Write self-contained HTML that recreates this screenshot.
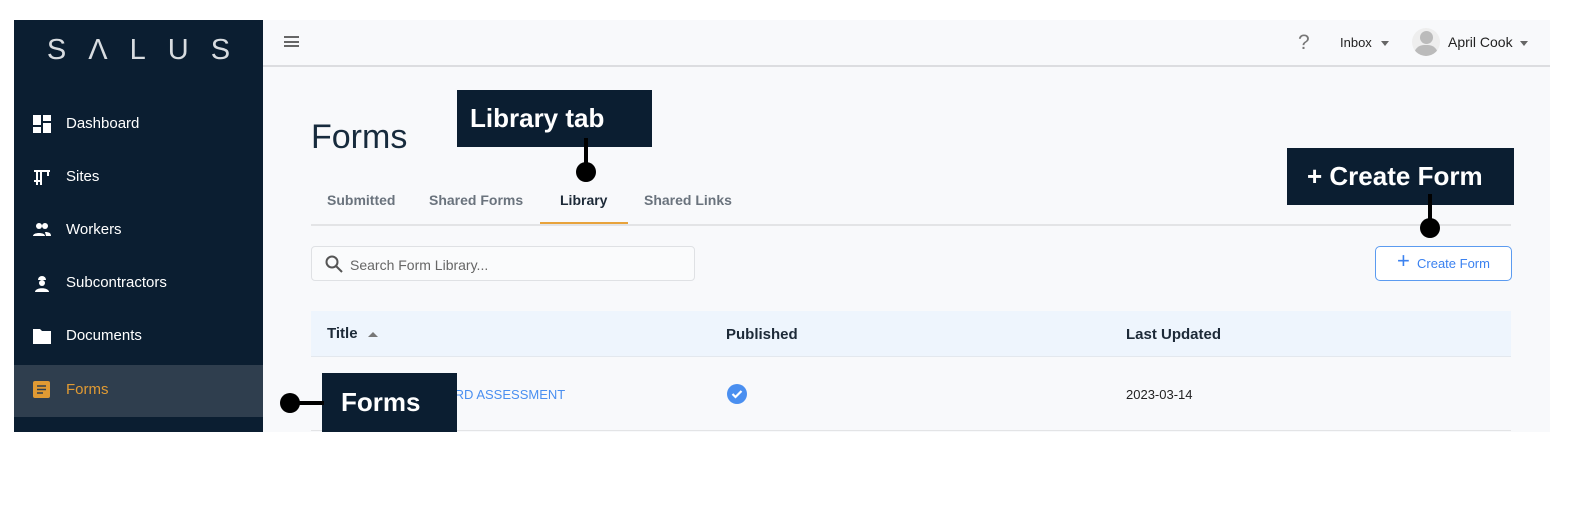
<!DOCTYPE html>
<html><head><style>
*{margin:0;padding:0;box-sizing:border-box}
body{width:1592px;height:524px;background:#fff;font-family:"Liberation Sans",sans-serif;position:relative;overflow:hidden}
.a{position:absolute}
.side{left:14px;top:20px;width:249px;height:412px;background:#0b1e31}
.logo{left:14px;top:34px;width:249px;text-align:center;color:#d8dce0;font-size:29px;letter-spacing:22px;padding-left:22px}
.nav{left:14px;width:249px;height:46px;color:#fff;font-size:15px}
.nav span{position:absolute;left:52px;top:14px}
.nav svg{position:absolute;left:19px;top:14px}
.main{left:263px;top:20px;width:1287px;height:412px;background:#f8f9fb}
.top{left:263px;top:20px;width:1287px;height:47px;background:#f8f9fb;border-bottom:2px solid #dcdde0}
.tab{top:192px;font-size:14px;color:#6a737d;font-weight:bold}
.call{background:#0b1e31;color:#fff;font-weight:bold;font-size:26px;}
.dot{width:20px;height:20px;border-radius:50%;background:#000}
</style></head><body>
<div class="a side"></div>
<div class="a logo">SΛLUS</div>
<div class="a nav" style="top:101px"><svg width="18" height="18" viewBox="0 0 18 18" fill="#fff"><rect x="0" y="0" width="8" height="10"/><rect x="10" y="0" width="8" height="6"/><rect x="0" y="12" width="8" height="6"/><rect x="10" y="8" width="8" height="10"/></svg><span>Dashboard</span></div>
<div class="a nav" style="top:154px"><svg width="18" height="18" viewBox="0 0 18 18" fill="none" stroke="#fff" stroke-width="2"><path d="M1 3h16M4 3v14M8 3v14M15 3v5M1 13h8"/></svg><span>Sites</span></div>
<div class="a nav" style="top:207px"><svg width="18" height="18" viewBox="0 0 18 18" fill="#fff"><circle cx="6" cy="5" r="3"/><circle cx="12" cy="5" r="3"/><path d="M0 15c0-4 12-4 12 0zM12 11c4 0 6 1 6 4h-5z"/></svg><span>Workers</span></div>
<div class="a nav" style="top:260px"><svg width="18" height="18" viewBox="0 0 18 18" fill="#fff"><path d="M5 6a4 4 0 0 1 8 0z"/><circle cx="9" cy="9" r="3"/><path d="M2 18c0-5 14-5 14 0z"/></svg><span>Subcontractors</span></div>
<div class="a nav" style="top:313px"><svg width="18" height="18" viewBox="0 0 18 18" fill="#fff"><path d="M0 2h7l2 2h9v13H0z"/></svg><span>Documents</span></div>
<div class="a" style="left:14px;top:365px;width:249px;height:52px;background:#2f3e4e"></div>
<div class="a nav" style="top:367px;color:#e09a33"><svg width="18" height="18" viewBox="0 0 18 18"><rect width="17" height="17" rx="2" fill="#e09a33"/><path d="M4 5h9M4 8.5h9M4 12h6" stroke="#2f3e4e" stroke-width="1.6"/></svg><span>Forms</span></div>

<div class="a main"></div>
<div class="a top"></div>
<div class="a" style="left:284px;top:36px;width:15px;height:11px;border-top:2px solid #666;border-bottom:2px solid #666"><div style="margin-top:2.5px;height:2px;background:#666"></div></div>
<div class="a" style="left:1298px;top:31px;font-size:21px;color:#777">?</div>
<div class="a" style="left:1340px;top:35px;font-size:13px;color:#222">Inbox</div>
<div class="a" style="left:1381px;top:41px;border:4px solid transparent;border-top:5px solid #666"></div>
<div class="a" style="left:1412px;top:28px;width:28px;height:28px;border-radius:50%;background:#eee;overflow:hidden"><div style="position:absolute;left:8px;top:3px;width:13px;height:13px;border-radius:50%;background:#bbb"></div><div style="position:absolute;left:2px;top:17px;width:24px;height:16px;border-radius:10px 10px 0 0;background:#bbb"></div></div>
<div class="a" style="left:1448px;top:34px;font-size:14px;color:#222">April Cook</div>
<div class="a" style="left:1520px;top:41px;border:4px solid transparent;border-top:5px solid #666"></div>

<div class="a" style="left:311px;top:118px;font-size:34px;color:#172b3d">Forms</div>
<div class="a tab" style="left:327px">Submitted</div>
<div class="a tab" style="left:429px">Shared Forms</div>
<div class="a tab" style="left:560px;color:#1d2a38">Library</div>
<div class="a tab" style="left:644px">Shared Links</div>
<div class="a" style="left:311px;top:224px;width:1200px;height:2px;background:#e3e4e6"></div>
<div class="a" style="left:540px;top:222px;width:88px;height:2px;background:#e8a33b"></div>

<div class="a" style="left:311px;top:246px;width:384px;height:35px;border:1px solid #dfe1e4;border-radius:4px;background:#fafbfc"></div>
<svg class="a" style="left:325px;top:255px" width="18" height="18" viewBox="0 0 18 18" fill="none" stroke="#555" stroke-width="2"><circle cx="7" cy="7" r="5.5"/><path d="M11 11l6 6"/></svg>
<div class="a" style="left:350px;top:257px;font-size:14px;color:#666">Search Form Library...</div>

<div class="a" style="left:1375px;top:246px;width:137px;height:35px;border:1px solid #5b9bf0;border-radius:5px;background:#fff"></div>
<div class="a" style="left:1397px;top:248px;font-size:22px;color:#3b82f0">+</div>
<div class="a" style="left:1417px;top:256px;font-size:13px;color:#3b82f0">Create Form</div>

<div class="a" style="left:311px;top:311px;width:1200px;height:46px;background:#eef5fd;border-bottom:1px solid #e3e8ee"></div>
<div class="a" style="left:327px;top:325px;font-size:15px;font-weight:bold;color:#1d2a38">Title</div>
<div class="a" style="left:368px;top:332px;border:5px solid transparent;border-bottom:5px solid #777;border-top:0"></div>
<div class="a" style="left:726px;top:326px;font-size:15px;font-weight:bold;color:#1d2a38">Published</div>
<div class="a" style="left:1126px;top:326px;font-size:15px;font-weight:bold;color:#1d2a38">Last Updated</div>
<div class="a" style="left:420px;top:387px;font-size:13px;color:#4a8ff0">HAZARD ASSESSMENT</div>
<svg class="a" style="left:727px;top:384px" width="20" height="20" viewBox="0 0 20 20"><circle cx="10" cy="10" r="10" fill="#4a8ff0"/><path d="M5.5 10l3 3 6-6" stroke="#fff" stroke-width="2.2" fill="none"/></svg>
<div class="a" style="left:1126px;top:387px;font-size:13px;color:#222">2023-03-14</div>
<div class="a" style="left:311px;top:430px;width:1200px;height:1px;background:#e3e4e6"></div>

<div class="a call" style="left:457px;top:90px;width:195px;height:57px;padding:13px 0 0 13px">Library tab</div>
<div class="a" style="left:584px;top:138px;width:4px;height:30px;background:#000"></div>
<div class="a dot" style="left:576px;top:162px"></div>

<div class="a call" style="left:1287px;top:148px;width:227px;height:57px;padding:13px 0 0 20px">+ Create Form</div>
<div class="a" style="left:1428px;top:194px;width:4px;height:30px;background:#000"></div>
<div class="a dot" style="left:1420px;top:218px"></div>

<div class="a call" style="left:322px;top:373px;width:135px;height:59px;padding:14px 0 0 19px">Forms</div>
<div class="a" style="left:290px;top:401px;width:34px;height:4px;background:#000"></div>
<div class="a dot" style="left:280px;top:393px"></div>
</body></html>
